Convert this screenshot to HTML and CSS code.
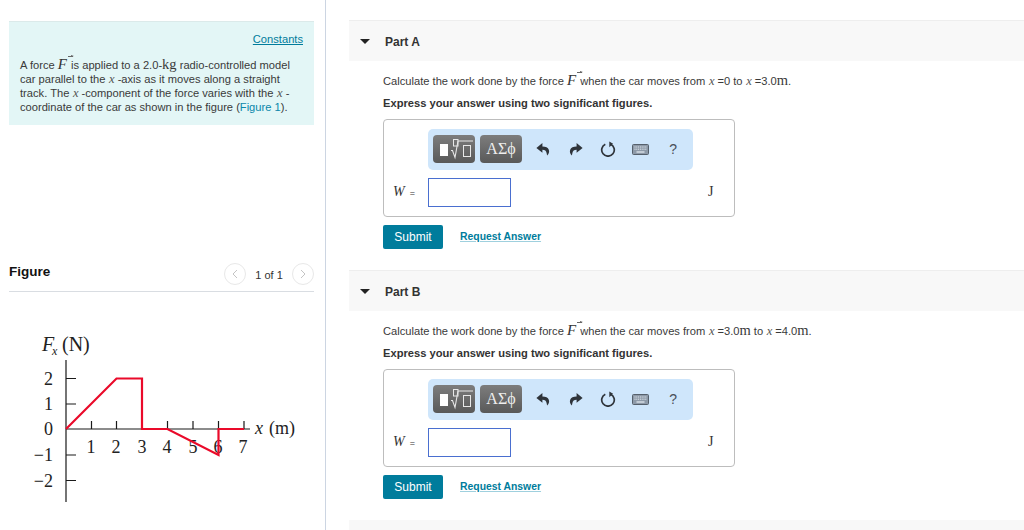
FILE: index.html
```html
<!DOCTYPE html>
<html lang="en">
<head>
<meta charset="utf-8">
<title>Work done by a force</title>
<link rel="stylesheet" href="styles.css">
</head>
<body>
<svg class="defs" width="0" height="0" aria-hidden="true">
  <symbol id="i-undo" viewBox="0 0 14 14"><path d="M6.400 1 .4 6l6 4.800V7.800c2.400 0 3.900.9 4.300 3.700l.4 2c1.800-1.700 2.500-3.800 1.700-5.800-.8-2-3-3.200-6.400-3.200z" fill="#2f343a"/></symbol>
  <symbol id="i-redo" viewBox="0 0 14 14"><path d="M7.600 1l6 5-6 4.800V7.800c-2.400 0-3.900.9-4.300 3.700l-.4 2C1.100 11.800.4 9.700 1.200 7.700c.8-2 3-3.200 6.400-3.200z" fill="#2f343a"/></symbol>
  <symbol id="i-reset" viewBox="0 0 16 16"><path d="M5.300 3.200a6.300 6.300 0 1 0 5.400 0" fill="none" stroke="#2f343a" stroke-width="1.700"/><path d="M9.300 0.600v5.600l3.800-3.400z" fill="#2f343a"/></symbol>
  <symbol id="i-keys" viewBox="0 0 17 11"><rect x=".5" y=".5" width="16" height="10" rx="1" fill="#8e9aa8" stroke="#56606c"/><path d="M2.500 3h12M2.500 5.200h12" stroke="#e8eef4" stroke-width="1" stroke-dasharray="1 .8"/><path d="M4.500 8h8" stroke="#e8eef4" stroke-width="1.200"/></symbol>
  <symbol id="i-tmpl" viewBox="0 0 42 28"><rect x="7" y="9" width="8" height="12" fill="#fff"/><rect x="20.500" y="4.500" width="4.500" height="6.500" fill="none" stroke="#e8e8e8"/><path d="M18 15.500h1.500l2.500 7 3-16.500h15" fill="none" stroke="#e8e8e8" stroke-width="1.100"/><rect x="30.500" y="10.500" width="7" height="11" fill="none" stroke="#e8e8e8"/></symbol>
</svg>
<div class="page">
  <aside class="side">
    <div class="intro">
      <a class="constants" href="#">Constants</a>
      <p class="intro-text">A force <span class="vec">F</span> is applied to a 2.0-<span class="unit">kg</span> radio-controlled model car parallel to the <i class="var">x</i>-axis as it moves along a straight track. The <i class="var">x</i>-component of the force varies with the <i class="var">x</i>-coordinate of the car as shown in the figure (<a class="fig-link" href="#">Figure 1</a>).</p>
    </div>
    <div class="fig-head">
      <h2 class="fig-title">Figure</h2>
      <div class="pager">
        <span class="page-btn"><svg width="8" height="10" viewBox="0 0 8 10"><path d="M6 1 2 5l4 4" fill="none" stroke="#c4c4c4"/></svg></span>
        <span class="page-count">1 of 1</span>
        <span class="page-btn"><svg width="8" height="10" viewBox="0 0 8 10"><path d="M2 1l4 4-4 4" fill="none" stroke="#c4c4c4"/></svg></span>
      </div>
    </div>
    <svg class="graph" viewBox="9 292 305 238" width="305" height="238" role="img" aria-label="Graph of Fx in newtons against x in metres">
      <g stroke="#1a1a1a" stroke-width="1.200" fill="none">
        <path d="M66 360V502M66 429H250"/>
        <path d="M66 378.500H76M66 404H76M66 455H76M66 480.500H76"/>
        <path d="M91.500 429V421M116.500 429V421M142 429V421M167.500 429V421M193 429V421M218.500 429V421M244 429V421"/>
      </g>
      <g class="g-num">
        <text x="42" y="351" class="g-it g-big">F</text><text x="52" y="355" class="g-it g-sub">x</text><text x="62" y="351" class="g-big">(N)</text>
        <text x="53" y="385" text-anchor="end">2</text>
        <text x="53" y="410" text-anchor="end">1</text>
        <text x="53" y="435" text-anchor="end">0</text>
        <text x="53" y="461" text-anchor="end">−1</text>
        <text x="53" y="487" text-anchor="end">−2</text>
        <text x="91" y="453" text-anchor="middle">1</text>
        <text x="116" y="453" text-anchor="middle">2</text>
        <text x="142" y="453" text-anchor="middle">3</text>
        <text x="167" y="453" text-anchor="middle">4</text>
        <text x="193" y="453" text-anchor="middle">5</text>
        <text x="218" y="453" text-anchor="middle">6</text>
        <text x="243" y="453" text-anchor="middle">7</text>
        <text x="255" y="434" class="g-it">x</text><text x="269" y="434">(m)</text>
      </g>
      <path d="M66 429 116.500 378.500H142V429H167.500L218.500 455V429H244" fill="none" stroke="#ea0a2a" stroke-width="2.200"/>
    </svg>
  </aside>
  <main class="parts">
    <section class="part">
      <header class="part-head"><span class="caret"></span><h3 class="part-title">Part A</h3></header>
      <div class="part-body">
        <p class="prompt">Calculate the work done by the force <span class="vec">F</span> when the car moves from <i class="var">x</i>=0 to <i class="var">x</i>=3.0<span class="unit">m</span>.</p>
        <p class="hint">Express your answer using two significant figures.</p>
        <div class="answer">
          <div class="toolbar">
            <span class="tool-dark"><svg width="42" height="28"><use href="#i-tmpl"/></svg></span>
            <span class="tool-dark tool-greek">ΑΣϕ</span>
            <span class="tool"><svg width="14" height="14"><use href="#i-undo"/></svg></span>
            <span class="tool"><svg width="14" height="14"><use href="#i-redo"/></svg></span>
            <span class="tool"><svg width="16" height="16"><use href="#i-reset"/></svg></span>
            <span class="tool"><svg width="17" height="11"><use href="#i-keys"/></svg></span>
            <span class="tool tool-help">?</span>
          </div>
          <div class="entry">
            <span class="lhs"><i>W</i><span class="eq">=</span></span>
            <span class="field"></span>
            <span class="si">J</span>
          </div>
        </div>
        <div class="actions"><button class="submit" type="button">Submit</button><a class="request" href="#">Request Answer</a></div>
      </div>
    </section>
    <section class="part">
      <header class="part-head"><span class="caret"></span><h3 class="part-title">Part B</h3></header>
      <div class="part-body">
        <p class="prompt">Calculate the work done by the force <span class="vec">F</span> when the car moves from <i class="var">x</i>=3.0<span class="unit">m</span> to <i class="var">x</i>=4.0<span class="unit">m</span>.</p>
        <p class="hint">Express your answer using two significant figures.</p>
        <div class="answer">
          <div class="toolbar">
            <span class="tool-dark"><svg width="42" height="28"><use href="#i-tmpl"/></svg></span>
            <span class="tool-dark tool-greek">ΑΣϕ</span>
            <span class="tool"><svg width="14" height="14"><use href="#i-undo"/></svg></span>
            <span class="tool"><svg width="14" height="14"><use href="#i-redo"/></svg></span>
            <span class="tool"><svg width="16" height="16"><use href="#i-reset"/></svg></span>
            <span class="tool"><svg width="17" height="11"><use href="#i-keys"/></svg></span>
            <span class="tool tool-help">?</span>
          </div>
          <div class="entry">
            <span class="lhs"><i>W</i><span class="eq">=</span></span>
            <span class="field"></span>
            <span class="si">J</span>
          </div>
        </div>
        <div class="actions"><button class="submit" type="button">Submit</button><a class="request" href="#">Request Answer</a></div>
      </div>
    </section>
    <div class="part-head part-next"></div>
  </main>
</div>
</body>
</html>
```
FILE: styles.css
```css
* { box-sizing: border-box; }
html, body { margin: 0; height: 530px; overflow: hidden; background: #fff; }
body { font-family: "Liberation Sans", Arial, sans-serif; font-size: 11.150px; color: #333; }
.defs { position: absolute; }
p, h2, h3 { margin: 0; }
.page { display: flex; height: 530px; }

.side { width: 326px; flex: none; padding: 21px 11px 0 9px; border-right: 1px solid #ccd5e2; }
.intro { height: 104px; padding: 10px 11px 0; background: #e3f6f6; border-top: 1px solid #dbeaea; display: flex; flex-direction: column; }
.constants { align-self: flex-end; color: #007c9c; line-height: 14px; text-decoration: underline; }
.intro-text { margin-top: 12px; line-height: 14px; color: #3a3a3a; }
.fig-link { color: #0a87ab; text-decoration: none; }

.vec { position: relative; font-family: "Liberation Serif", serif; font-style: italic; font-size: 15px; line-height: 0; margin-right: 1px; color: #333; }
.vec::before { content: ""; position: absolute; left: 10px; top: 0; width: 5px; height: 1px; background: #666; }
.vec::after { content: ""; position: absolute; left: 13px; top: -1px; border-left: 3px solid #666; border-top: 1.500px solid transparent; border-bottom: 1.500px solid transparent; }
.var { font-family: "Liberation Serif", serif; font-size: 12.500px; line-height: 0; padding: 0 3px 0 .5px; color: #555; }
.unit { font-family: "Liberation Serif", serif; font-size: 14.500px; line-height: 0; }

.fig-head { display: flex; justify-content: space-between; align-items: flex-start; height: 30px; margin-top: 137px; border-bottom: 1px solid #d9dde2; }
.fig-title { font-size: 13.500px; line-height: 19px; font-weight: bold; color: #111; }
.pager { display: flex; align-items: center; margin-top: 1px; height: 22px; }
.page-btn { display: flex; align-items: center; justify-content: center; width: 22px; height: 22px; border: 1px solid #e8e8e8; border-radius: 50%; }
.page-count { width: 46px; padding-top: 1px; text-align: center; font-size: 11px; color: #333; }
.graph { display: block; }
.g-num text { font-family: "Liberation Serif", serif; font-size: 18px; fill: #222; }
.g-num .g-it { font-style: italic; }
.g-num .g-big { font-size: 20px; }
.g-num .g-sub { font-size: 12px; }

.parts { flex: 1; padding: 20px 0 0 23px; min-width: 0; }
.part { height: 250px; }
.part-head { display: flex; align-items: center; height: 41px; padding-left: 11px; background: #f8f8f8; border-top: 1px solid #eeeeee; }
.part-next { height: 20px; border-top: 0; }
.caret { width: 0; height: 0; border-top: 5px solid #222; border-left: 5px solid transparent; border-right: 5px solid transparent; }
.part-title { margin-left: 15px; padding-top: 1px; font-size: 12px; font-weight: bold; color: #333; }
.part-body { padding-left: 34px; }
.prompt { margin-top: 12px; line-height: 16px; color: #3a3a3a; }
.hint { margin-top: 6px; line-height: 16px; font-weight: bold; color: #333; }

.answer { width: 352px; height: 98px; margin-top: 8px; padding: 9px 0 0 44px; border: 1px solid #bdbdbd; border-radius: 4px; background: #fff; }
.toolbar { display: flex; align-items: center; width: 265px; height: 41px; padding: 0 0 1px 5px; background: #cfe6fb; border-radius: 5px; }
.tool-dark { display: flex; align-items: center; justify-content: center; width: 42px; height: 28px; margin-right: 5px; border-radius: 4px; background: linear-gradient(#7d7d7d, #595959); }
.tool-greek { font-family: "Liberation Serif", serif; font-size: 16px; color: #eee; }
.tool { display: flex; align-items: center; justify-content: center; width: 32.500px; }
.tool-help { font-size: 14px; color: #4a5058; }
.entry { display: flex; align-items: center; margin-top: 8px; margin-left: -35px; }
.lhs { width: 35px; padding-bottom: 2px; font-family: "Liberation Serif", serif; font-size: 14px; color: #333; }
.eq { margin-left: 5px; font-family: "Liberation Sans", sans-serif; font-size: 9px; }
.field { width: 83px; height: 29px; border: 1px solid #4a6fd0; background: #fff; }
.si { margin-left: 197px; padding-bottom: 2px; font-family: "Liberation Serif", serif; font-size: 14px; color: #333; }

.actions { display: flex; align-items: center; margin-top: 8px; }
.submit { width: 60px; height: 24px; padding: 0; border: 0; border-radius: 2px; background: #007c9c; color: #fff; font-family: "Liberation Sans", sans-serif; font-size: 12px; }
.request { margin-left: 17px; margin-bottom: 2px; font-size: 10.400px; font-weight: bold; color: #007c9c; text-decoration: underline; text-decoration-color: #9fd0de; }
```
